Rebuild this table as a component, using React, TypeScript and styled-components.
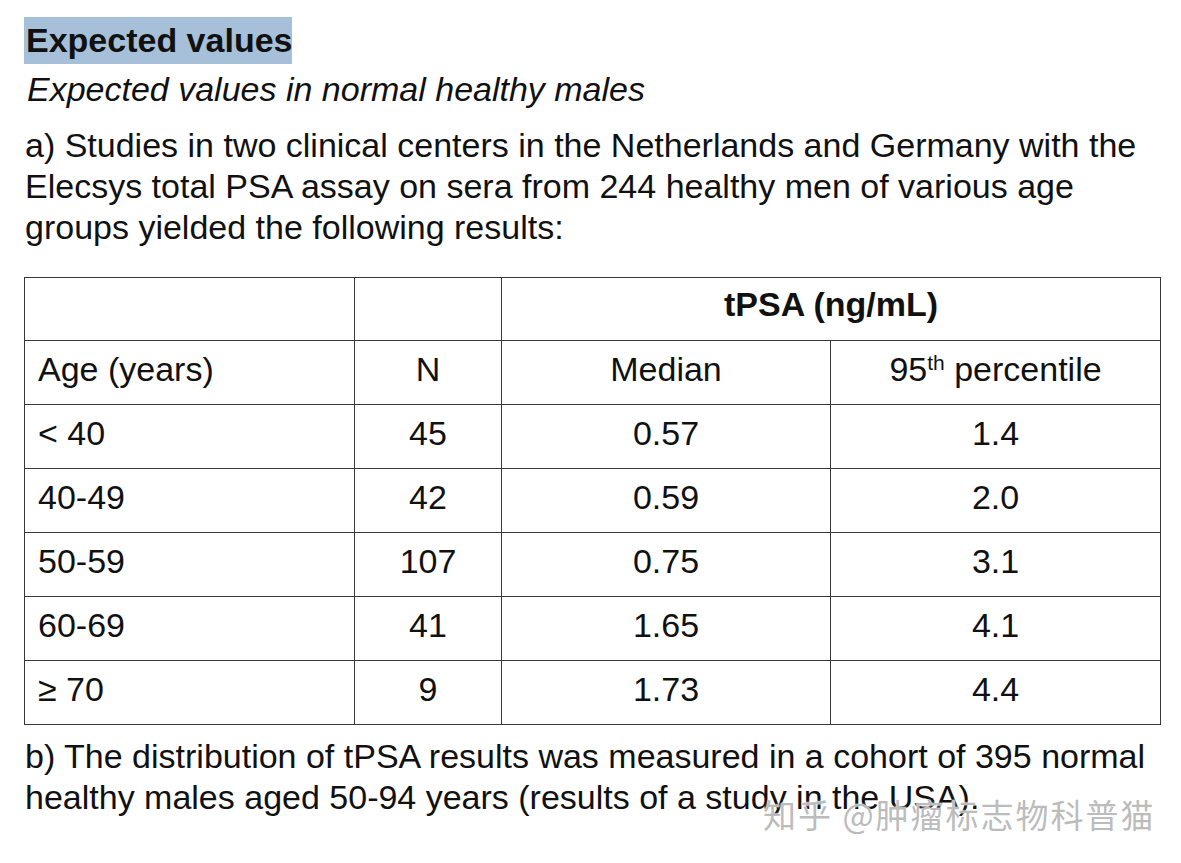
import React from "react";
import styled, { createGlobalStyle } from "styled-components";

const Global = createGlobalStyle`
  html, body { margin: 0; padding: 0; background: #ffffff; }
  body {
    font-family: "Liberation Sans", Arial, sans-serif;
    color: #111111;
  }
`;

const Page = styled.div`
  position: relative;
  width: 1181px;
  height: 863px;
  padding: 17px 0 0 24px;
  box-sizing: border-box;
  overflow: hidden;
`;

const Heading = styled.h1`
  display: inline-block;
  margin: 0;
  padding: 0 0 0 2px;
  background: #a7c0d9;
  font-size: 34px;
  font-weight: 700;
  line-height: 47px;
`;

const Subtitle = styled.p`
  margin: 5px 0 0 3px;
  font-style: italic;
  font-size: 34px;
  line-height: 41px;
`;

const Para = styled.p<{ $top: number }>`
  margin: ${(p) => p.$top}px 0 0 1px;
  font-size: 34px;
  line-height: 41px;
  white-space: nowrap;
`;

const Table = styled.table`
  margin-top: 29px;
  border-collapse: collapse;
  width: 1136px;
  table-layout: fixed;
`;

const Row = styled.tr<{ $h: number }>`
  height: ${(p) => p.$h}px;
`;

const Cell = styled.td<{ $align?: "left" | "center"; $bold?: boolean }>`
  border: 1px solid #383838;
  padding: 0 0 ${(p) => (p.$bold ? "10px" : "7px")} ${(p) => (p.$align === "left" ? "13px" : "0")};
  text-align: ${(p) => p.$align ?? "center"};
  font-size: 34px;
  font-weight: ${(p) => (p.$bold ? 700 : 400)};
  line-height: 40px;
  vertical-align: middle;
`;

const Sup = styled.sup`
  font-size: 21px;
  line-height: 0;
  vertical-align: 11px;
`;

const Watermark = styled.div`
  position: absolute;
  left: 763px;
  top: 794px;
  font-family: "Noto Sans CJK SC", sans-serif;
  font-size: 33px;
  line-height: 40px;
  letter-spacing: 2px;
  color: rgba(170, 170, 170, 0.8);
  text-shadow: 0 0 2px #ffffff, 0 0 1px #ffffff;
  white-space: nowrap;
`;

const rows: [string, string, string, string][] = [
  ["< 40", "45", "0.57", "1.4"],
  ["40-49", "42", "0.59", "2.0"],
  ["50-59", "107", "0.75", "3.1"],
  ["60-69", "41", "1.65", "4.1"],
  ["\u2265 70", "9", "1.73", "4.4"],
];

export default function App() {
  return (
    <>
      <Global />
      <Page>
        <Heading>Expected values</Heading>
        <Subtitle>Expected values in normal healthy males</Subtitle>
        <Para $top={15}>
          a) Studies in two clinical centers in the Netherlands and Germany with the
          <br />
          Elecsys total PSA assay on sera from 244 healthy men of various age
          <br />
          groups yielded the following results:
        </Para>
        <Table>
          <colgroup>
            <col style={{ width: 330 }} />
            <col style={{ width: 147 }} />
            <col style={{ width: 329 }} />
            <col style={{ width: 330 }} />
          </colgroup>
          <tbody>
            <Row $h={63}>
              <Cell />
              <Cell />
              <Cell colSpan={2} $bold>
                tPSA (ng/mL)
              </Cell>
            </Row>
            <Row $h={64}>
              <Cell $align="left">Age (years)</Cell>
              <Cell>N</Cell>
              <Cell>Median</Cell>
              <Cell>
                95<Sup>th</Sup> percentile
              </Cell>
            </Row>
            {rows.map((r) => (
              <Row $h={64} key={r[0]}>
                <Cell $align="left">{r[0]}</Cell>
                <Cell>{r[1]}</Cell>
                <Cell>{r[2]}</Cell>
                <Cell>{r[3]}</Cell>
              </Row>
            ))}
          </tbody>
        </Table>
        <Para $top={11}>
          b) The distribution of tPSA results was measured in a cohort of 395 normal
          <br />
          healthy males aged 50-94 years (results of a study in the USA).
        </Para>
        <Watermark>知乎 @肿瘤标志物科普猫</Watermark>
      </Page>
    </>
  );
}
